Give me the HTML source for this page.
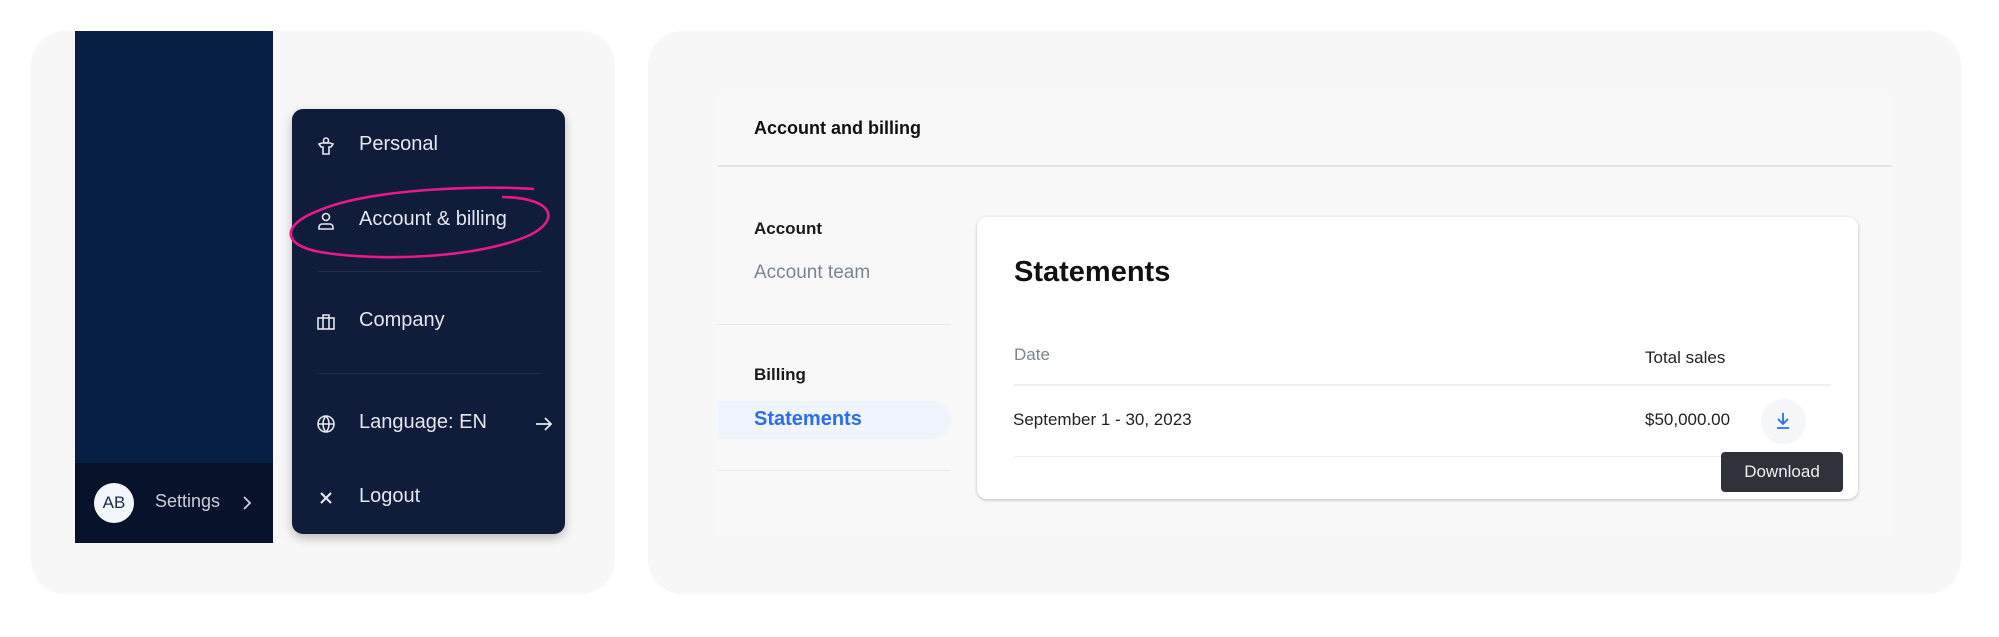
<!DOCTYPE html>
<html><head><meta charset="utf-8"><style>
*{margin:0;padding:0;box-sizing:border-box}
body{width:1999px;height:637px;background:#fff;position:relative;overflow:hidden;font-family:"Liberation Sans",sans-serif}
.abs{position:absolute}
.lp{left:31px;top:31px;width:584px;height:563px;background:#f7f7f7;border-radius:34px}
.rp{left:648px;top:31px;width:1313px;height:563px;background:#f7f7f7;border-radius:34px}
.side{left:75px;top:31px;width:198px;height:512px;background:#071f44}
.sideb{left:75px;top:463px;width:198px;height:80px;background:#07132a}
.av{left:94px;top:483px;width:40px;height:40px;border-radius:50%;background:#f3f6fd;color:#1b2a4a;font-size:17px;line-height:40px;text-align:center}
.menu{left:292px;top:109px;width:273px;height:425px;background:#0f1c3a;border-radius:11px;box-shadow:0 4px 10px rgba(0,0,0,.25)}
.mi{color:#e4e7ee;font-size:20px;left:359px}
.ic{left:316px;width:20px;height:20px}
.dv{left:318px;width:223px;height:1px;background:#22304e}
.t{white-space:nowrap}
</style></head><body>
<div class="abs lp"></div>
<div class="abs side"></div>
<div class="abs sideb"></div>
<div class="abs av">AB</div>
<div class="abs t" style="left:155px;top:491px;color:#c9ceda;font-size:18px">Settings</div>
<svg class="abs" style="left:240px;top:494px" width="14" height="18"><path d="M4 3l6 6-6 6" stroke="#c9ceda" stroke-width="1.8" fill="none"/></svg>
<div class="abs menu"></div>
<svg class="abs ic" style="top:136px" viewBox="0 0 20 20" fill="none" stroke="#e4e7ee" stroke-width="1.6"><circle cx="10" cy="4.5" r="2.5"/><path d="M3 8l3-1h8l3 1-2 3h-2v7H7v-7H5z"/></svg>
<div class="abs mi t" style="top:133px">Personal</div>
<svg class="abs ic" style="top:211px" viewBox="0 0 20 20" fill="none" stroke="#e4e7ee" stroke-width="1.6"><circle cx="10" cy="6" r="3.5"/><path d="M3 18v-2a3 3 0 0 1 3-3h8a3 3 0 0 1 3 3v2z"/></svg>
<div class="abs mi t" style="top:208px">Account &amp; billing</div>
<div class="abs dv" style="top:271px"></div>
<svg class="abs ic" style="top:312px" viewBox="0 0 20 20" fill="none" stroke="#e4e7ee" stroke-width="1.6"><rect x="2" y="6" width="16" height="11"/><path d="M7 6V3h6v3M7 6v11M13 6v11"/></svg>
<div class="abs mi t" style="top:309px">Company</div>
<div class="abs dv" style="top:373px"></div>
<svg class="abs ic" style="top:414px" viewBox="0 0 20 20" fill="none" stroke="#e4e7ee" stroke-width="1.6"><circle cx="10" cy="10" r="8"/><path d="M2 10h16M10 2c-4 4-4 12 0 16M10 2c4 4 4 12 0 16"/></svg>
<div class="abs mi t" style="top:411px">Language: EN</div>
<svg class="abs" style="left:534px;top:414px" width="20" height="20" fill="none" stroke="#e4e7ee" stroke-width="1.8"><path d="M2 10h15M11 4l6 6-6 6"/></svg>
<svg class="abs" style="left:318px;top:490px" width="16" height="16" stroke="#e4e7ee" stroke-width="2.2"><path d="M3 3l10 10M13 3L3 13"/></svg>
<div class="abs mi t" style="top:485px">Logout</div>
<svg class="abs" style="left:280px;top:180px" width="290" height="85" fill="none" stroke="#e8198b" stroke-width="2.6"><path d="M254 9C200 5 90 9 40 30C0 45 2 65 40 72C100 82 200 78 250 55C280 40 275 18 222 17"/></svg>

<div class="abs rp"></div>
<div class="abs" style="left:718px;top:93px;width:1174px;height:442px;background:#f8f8f8"></div>
<div class="abs t" style="left:754px;top:118px;font-size:18px;font-weight:bold;color:#111">Account and billing</div>
<div class="abs" style="left:718px;top:165px;width:1174px;height:2px;background:#e3e4e8"></div>
<div class="abs t" style="left:754px;top:219px;font-size:17px;font-weight:bold;color:#1a1a1a">Account</div>
<div class="abs t" style="left:754px;top:262px;font-size:19px;color:#7b8494">Account team</div>
<div class="abs" style="left:718px;top:324px;width:233px;height:1px;background:#e6e7ea"></div>
<div class="abs t" style="left:754px;top:365px;font-size:17px;font-weight:bold;color:#1a1a1a">Billing</div>
<div class="abs" style="left:718px;top:401px;width:233px;height:38px;background:#eff4fd;border-radius:0 19px 19px 0"></div>
<div class="abs t" style="left:754px;top:408px;font-size:20px;font-weight:bold;color:#2b6cf0">Statements</div>
<div class="abs" style="left:718px;top:470px;width:233px;height:1px;background:#e6e7ea"></div>
<div class="abs" style="left:977px;top:217px;width:881px;height:282px;background:#fff;border-radius:10px;box-shadow:0 1px 3px rgba(0,0,0,.25)"></div>
<div class="abs t" style="left:1014px;top:256px;font-size:29px;font-weight:bold;color:#111">Statements</div>
<div class="abs t" style="left:1014px;top:345px;font-size:17px;color:#7b8494">Date</div>
<div class="abs t" style="left:1645px;top:348px;font-size:17px;color:#222">Total sales</div>
<div class="abs" style="left:1014px;top:384px;width:817px;height:2px;background:#eeeff1"></div>
<div class="abs t" style="left:1013px;top:410px;font-size:17px;color:#222">September 1 - 30, 2023</div>
<div class="abs t" style="left:1645px;top:410px;font-size:17px;color:#222">$50,000.00</div>
<div class="abs" style="left:1761px;top:399px;width:45px;height:45px;border-radius:50%;background:#f5f6f8"></div>
<svg class="abs" style="left:1774px;top:411px" width="18" height="20" fill="none" stroke="#2b6cf0" stroke-width="1.8"><path d="M9 2v11M4 8l5 5 5-5M3 17h12"/></svg>
<div class="abs" style="left:1014px;top:456px;width:817px;height:1px;background:#eceef0"></div>
<div class="abs t" style="left:1721px;top:452px;width:122px;height:40px;background:#2f3339;border-radius:4px;color:#eceef0;font-size:17px;line-height:40px;text-align:center">Download</div>
</body></html>
